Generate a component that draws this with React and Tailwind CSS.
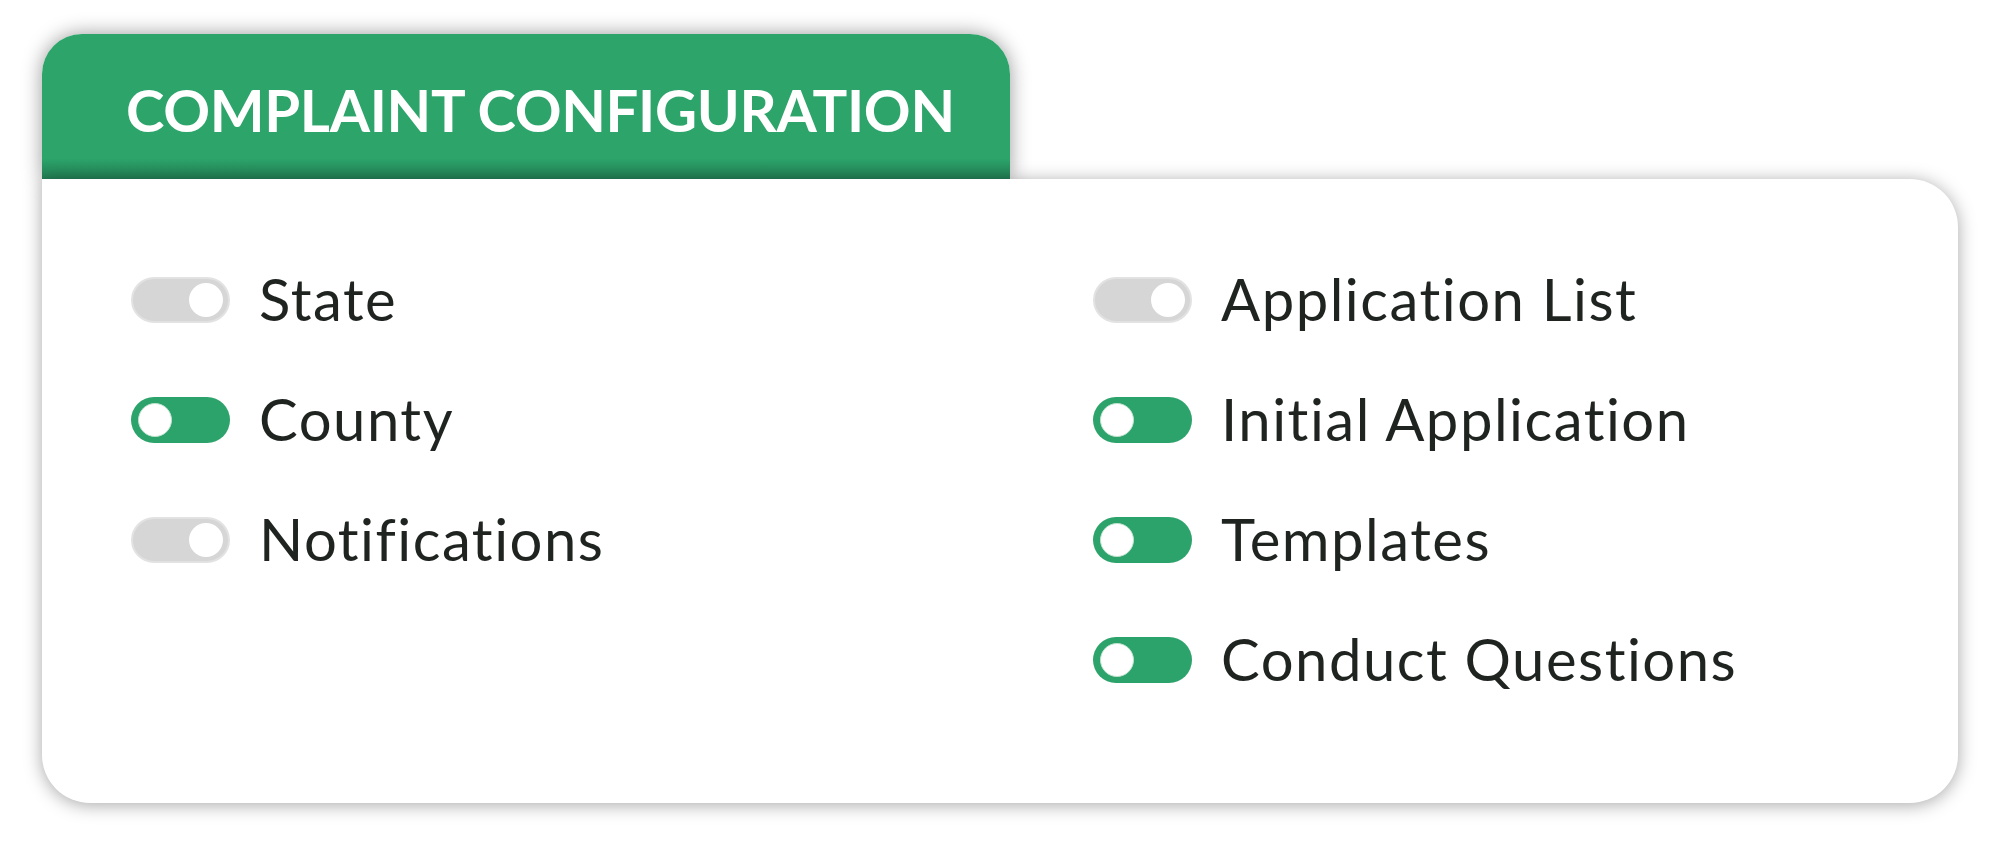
import React from "react";

function Toggle({ on }) {
  if (on) {
    return (
      <div className="w-[99px] h-[46px] rounded-full bg-[#2ba36a] flex items-center pl-[7px] shrink-0">
        <div className="w-[34px] h-[34px] rounded-full bg-white border border-[#bfe3cf]" />
      </div>
    );
  }
  return (
    <div className="w-[99px] h-[46px] rounded-full bg-[#d6d6d6] border-2 border-[#e2e2e2] flex items-center justify-end pr-[5px] shrink-0">
      <div className="w-[34px] h-[34px] rounded-full bg-white" />
    </div>
  );
}

function Row({ on, label }) {
  return (
    <div className="h-[120px] flex items-center gap-[29px]">
      <Toggle on={on} />
      <span className="text-[58px] leading-none tracking-[1.5px] text-[#1f2420] pb-[2px]">{label}</span>
    </div>
  );
}

export default function App() {
  const left = [
    { on: false, label: "State" },
    { on: true, label: "County" },
    { on: false, label: "Notifications" },
  ];
  const right = [
    { on: false, label: "Application List" },
    { on: true, label: "Initial Application" },
    { on: true, label: "Templates" },
    { on: true, label: "Conduct Questions" },
  ];
  return (
    <div
      className="w-[2000px] h-[845px] bg-white pl-[42px] pt-[34px] flex flex-col"
      style={{ fontFamily: "Lato, 'Open Sans', sans-serif" }}
    >
      <div className="w-[968px] h-[145px] bg-[linear-gradient(to_bottom,#2ca46a_86%,#237f54)] rounded-t-[40px] shadow-[0_0_20px_rgba(0,0,0,0.4)] flex items-center pl-[84px] pt-[6px] shrink-0">
        <span className="text-white font-bold text-[58px] leading-none tracking-[-0.3px]">
          COMPLAINT CONFIGURATION
        </span>
      </div>
      <div className="relative z-10 w-[1916px] h-[624px] bg-white rounded-tr-[48px] rounded-b-[48px] shadow-[0_2px_18px_rgba(0,0,0,0.35)] pl-[89px] pt-[61px] grid grid-cols-[962px_1fr] content-start">
        <div className="flex flex-col">
          {left.map((r) => (
            <Row key={r.label} {...r} />
          ))}
        </div>
        <div className="flex flex-col">
          {right.map((r) => (
            <Row key={r.label} {...r} />
          ))}
        </div>
      </div>
    </div>
  );
}
